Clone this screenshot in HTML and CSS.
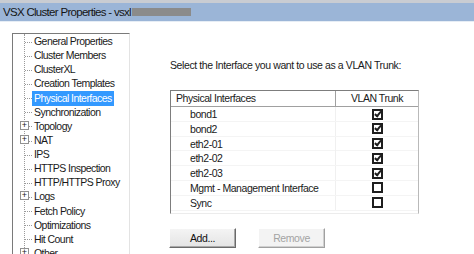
FILE: index.html
```html
<!DOCTYPE html>
<html lang="en">
<head>
    <meta charset="UTF-8">
    <title>VSX Cluster Properties</title>
    <link rel="stylesheet" href="styles.css">
</head>
<body>
    <div class="titlebar">
        <span class="title">VSX Cluster Properties - vsxl</span>
        <span class="redact"></span>
    </div>

    <div class="content">
        <!-- navigation tree -->
        <div class="tree">
            <ul class="tree-list">
                <li><span class="label">General Properties</span></li>
                <li><span class="label">Cluster Members</span></li>
                <li><span class="label">ClusterXL</span></li>
                <li><span class="label">Creation Templates</span></li>
                <li><span class="label selected">Physical Interfaces</span></li>
                <li><span class="label">Synchronization</span></li>
                <li class="parent"><span class="exp">+</span><span class="label">Topology</span></li>
                <li class="parent"><span class="exp">+</span><span class="label">NAT</span></li>
                <li><span class="label">IPS</span></li>
                <li><span class="label">HTTPS Inspection</span></li>
                <li><span class="label">HTTP/HTTPS Proxy</span></li>
                <li class="parent"><span class="exp">+</span><span class="label">Logs</span></li>
                <li><span class="label">Fetch Policy</span></li>
                <li><span class="label">Optimizations</span></li>
                <li><span class="label">Hit Count</span></li>
                <li class="parent"><span class="exp">+</span><span class="label">Other</span></li>
            </ul>
        </div>

        <!-- page -->
        <div class="page">
            <p class="prompt">Select the Interface you want to use as a VLAN Trunk:</p>

            <div class="grid">
                <div class="row head">
                    <div class="cell name">Physical Interfaces</div>
                    <div class="cell trunk">VLAN Trunk</div>
                </div>
                <div class="row">
                    <div class="cell name">bond1</div>
                    <div class="cell trunk"><span class="check on"></span></div>
                </div>
                <div class="row">
                    <div class="cell name">bond2</div>
                    <div class="cell trunk"><span class="check on"></span></div>
                </div>
                <div class="row">
                    <div class="cell name">eth2-01</div>
                    <div class="cell trunk"><span class="check on"></span></div>
                </div>
                <div class="row">
                    <div class="cell name">eth2-02</div>
                    <div class="cell trunk"><span class="check on"></span></div>
                </div>
                <div class="row">
                    <div class="cell name">eth2-03</div>
                    <div class="cell trunk"><span class="check on"></span></div>
                </div>
                <div class="row">
                    <div class="cell name">Mgmt - Management Interface</div>
                    <div class="cell trunk"><span class="check"></span></div>
                </div>
                <div class="row">
                    <div class="cell name">Sync</div>
                    <div class="cell trunk"><span class="check"></span></div>
                </div>
            </div>

            <div class="buttons">
                <button class="btn">Add...</button>
                <button class="btn" disabled>Remove</button>
            </div>
        </div>
    </div>
</body>
</html>
```

FILE: styles.css
```css
body {
    margin: 0;
    background-color: #ffffff;
    font-family: "Liberation Sans", Arial, sans-serif;
    font-size: 10.5px;
    letter-spacing: -0.45px;
    color: #1a1a1a;
    overflow: hidden;
    height: 254px;
}

.titlebar {
    display: flex;
    align-items: center;
    height: 18px;
    border-top: 3px solid #c9ccd2;
    background-color: #9bb5d7;
    padding-left: 3px;
    font-size: 11.5px;
    letter-spacing: -0.7px;
}
.title {
    color: #141414;
}
.redact {
    display: inline-block;
    width: 59px;
    height: 8px;
    margin-left: 1px;
    background-color: #8b8b8b;
}

.content {
    display: flex;
    padding-top: 11px;
    border-top: 1px solid #e6edf5;
}

/* tree */
.tree {
    width: 118px;
    height: 240px;
    margin-left: 12px;
    box-sizing: border-box;
    border: 1px solid;
    border-color: #7a7a7a #e3e3e3 #e3e3e3 #7a7a7a;
    padding-left: 11px;
}
.tree-list {
    list-style: none;
    margin: 0;
    padding: 0;
    border-left: 1px dotted #9a9a9a;
    letter-spacing: -0.55px;
}
.tree-list li {
    position: relative;
    height: 14.13px;
    line-height: 14px;
    white-space: nowrap;
}
.tree-list li::before {
    content: '';
    display: inline-block;
    width: 7px;
    vertical-align: middle;
    border-top: 1px dotted #9a9a9a;
}
.label {
    padding: 0 2px;
    display: inline-block;
}
.label.selected {
    background-color: #3399ff;
    color: #ffffff;
    line-height: 15px;
}
.exp {
    position: absolute;
    left: -5px;
    top: 2px;
    width: 7px;
    height: 7px;
    border: 1px solid #919191;
    background-color: #ffffff;
    font-size: 9px;
    letter-spacing: 0;
    line-height: 7px;
    text-align: center;
    color: #222;
}

/* page */
.page {
    margin-left: 40px;
}
.prompt {
    margin: 25px 0 18px 0;
    line-height: 14px;
    letter-spacing: -0.4px;
}

.grid {
    width: 249px;
    height: 124px;
    box-sizing: border-box;
    border: 1px solid;
    border-color: #7d7d7d #b9b9b9 #ececec #7d7d7d;
}
.row {
    display: grid;
    grid-template-columns: 165px 1fr;
    height: 14.8px;
    box-sizing: border-box;
    border-bottom: 1px solid #f4f4f4;
}
.row.head {
    height: 16px;
    border-bottom: 1px solid #a0a0a0;
}
.cell {
    line-height: 14px;
    white-space: nowrap;
}
.cell.name {
    padding-left: 19px;
    border-right: 1px solid #f0f0f0;
}
.cell.trunk {
    display: flex;
    align-items: center;
    justify-content: center;
}
.head .cell {
    line-height: 15px;
}
.head .cell.name {
    padding-left: 5px;
    border-right: 1px solid #a0a0a0;
}

.check {
    display: inline-block;
    width: 11px;
    height: 11px;
    box-sizing: border-box;
    border: 2px solid #1e1e1e;
    background-color: #ffffff;
    position: relative;
}
.check.on::after {
    content: '';
    position: absolute;
    left: 2px;
    top: -1px;
    width: 2px;
    height: 5px;
    border: solid #1e1e1e;
    border-width: 0 2px 2px 0;
    transform: rotate(40deg);
}

.buttons {
    display: flex;
    gap: 22px;
    margin-top: 14px;
    margin-left: -1px;
}
.btn {
    width: 67px;
    height: 20px;
    padding: 0;
    font-family: inherit;
    font-size: 10.5px;
    letter-spacing: -0.4px;
    color: #111;
    background: linear-gradient(#f4f4f4, #e4e4e4);
    border: 1px solid;
    border-color: #ffffff #6a6a6a #6a6a6a #ffffff;
    box-shadow: inset -1px -1px #a8a8a8;
}
.btn:disabled {
    color: #a3a3a3;
    background: #f3f3f3;
    border-color: #ffffff #a0a0a0 #a0a0a0 #ffffff;
    box-shadow: inset -1px -1px #d0d0d0;
}
```
